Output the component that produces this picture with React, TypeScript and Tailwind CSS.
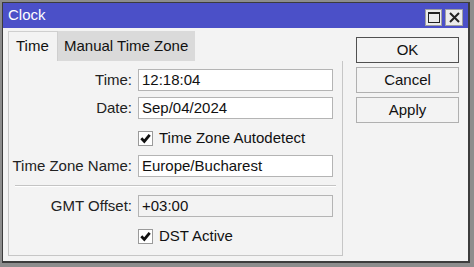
import React from "react";

const font = { fontFamily: '"Liberation Sans", Arial, sans-serif' };

function Field({ label, value, disabled }: { label: string; value: string; disabled?: boolean }) {
  return (
    <div className="flex items-center h-[22px]">
      <div className="w-[124px] text-right pr-[1px] text-[15px] text-[#222]">{label}</div>
      <div
        className={
          "ml-[5px] w-[195px] h-[22px] border flex items-center pl-[3px] text-[15px] text-[#111] " +
          (disabled ? "bg-[#f3f3f3] border-[#b4b4b4]" : "bg-white border-[#b4b4b4]")
        }
      >
        {value}
      </div>
    </div>
  );
}

function Check({ label }: { label: string }) {
  return (
    <div className="flex items-center h-[24px] pl-[129px]">
      <div className="w-[15px] h-[15px] bg-white border border-[#9a9a9a] flex items-center justify-center">
        <svg width="11" height="11" viewBox="0 0 11 11">
          <path d="M1.3 5.3 L4.3 8.4 L9.7 1.8" fill="none" stroke="#111" strokeWidth="2.8" />
        </svg>
      </div>
      <span className="ml-[6px] text-[15px] text-[#111]">{label}</span>
    </div>
  );
}

function Btn({ label, focused }: { label: string; focused?: boolean }) {
  return (
    <div
      className={
        "w-[103px] h-[26px] flex items-center justify-center text-[15px] text-[#111] bg-[#f3f3f3] border " +
        (focused ? "border-[#505050]" : "border-[#b0b0b0]")
      }
    >
      {label}
    </div>
  );
}

export default function App() {
  return (
    <div className="w-[474px] h-[267px] bg-[#8d8d8d] pt-[2px] pl-[2px]" style={font}>
      <div className="w-[468px] h-[261px] flex flex-col bg-[#f3f3f3] border-l border-t border-[#3c3c3c] border-r-2 border-b-2">
        {/* title bar */}
        <div className="h-[25px] bg-[#4b50c8] flex items-center pl-[5px] pr-[5px]">
          <span className="text-white text-[15px] flex-1">Clock</span>
          <div className="flex gap-[3px] mt-[3px]">
            <div className="w-[17px] h-[17px] bg-[#ececec] border border-[#a0a0a0] flex items-center justify-center">
              <div className="w-[12px] h-[11px] border border-[#222] border-t-2" />
            </div>
            <div className="w-[18px] h-[17px] bg-[#ececec] border border-[#a0a0a0] flex items-center justify-center">
              <svg width="11" height="11" viewBox="0 0 11 11">
                <path d="M1 1 L10 10 M10 1 L1 10" stroke="#222" strokeWidth="2" />
              </svg>
            </div>
          </div>
        </div>

        {/* body */}
        <div className="flex-1 flex pl-[5px] pr-[8px] pt-[3px] pb-[5px]">
          <div className="w-[335px] flex flex-col">
            <div className="flex h-[30px]">
              <div className="w-[50px] border-l border-t border-r border-[#cfcfcf] flex items-center pl-[7px] text-[15px] text-[#111]">
                Time
              </div>
              <div className="w-[137px] bg-[#dadada] flex items-center pl-[6px] text-[15px] text-[#111]">
                Manual Time Zone
              </div>
            </div>
            <div className="flex-1 border-l border-r border-b border-[#c6c6c6] pt-[8px] flex flex-col">
              <Field label="Time:" value="12:18:04" />
              <div className="mt-[6px]">
                <Field label="Date:" value="Sep/04/2024" />
              </div>
              <div className="mt-[7px]">
                <Check label="Time Zone Autodetect" />
              </div>
              <div className="mt-[5px]">
                <Field label="Time Zone Name:" value="Europe/Bucharest" />
              </div>
              <div className="mt-[8px] mx-[6px] h-[2px] border-t border-[#c4c4c4] border-b border-b-white" />
              <div className="mt-[8px]">
                <Field label="GMT Offset:" value="+03:00" disabled />
              </div>
              <div className="mt-[7px]">
                <Check label="DST Active" />
              </div>
            </div>
          </div>
          <div className="ml-[13px] pt-[6px] flex flex-col gap-[4px]">
            <Btn label="OK" focused />
            <Btn label="Cancel" />
            <Btn label="Apply" />
          </div>
        </div>
      </div>
    </div>
  );
}
